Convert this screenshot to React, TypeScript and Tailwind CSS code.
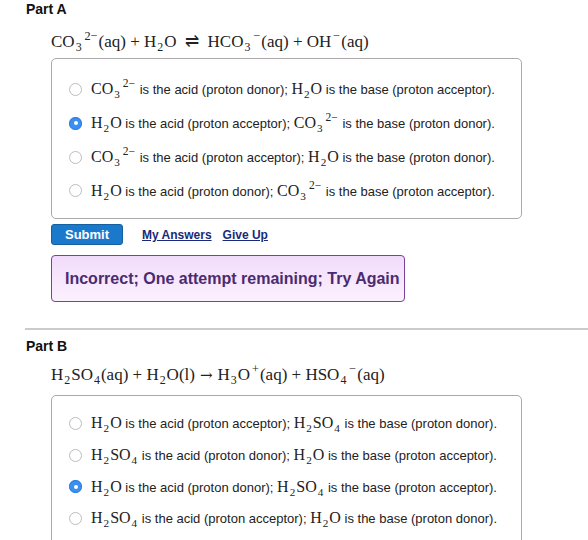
import React from 'react';

const serif = "font-['Liberation_Serif',serif]";

function Sb({ children }: { children: React.ReactNode }) {
  return <span className="relative top-[4px] text-[0.7em] leading-none ml-[1px] mr-[1px]">{children}</span>;
}

function Sp({ children }: { children: React.ReactNode }) {
  return <span className="relative top-[-7px] text-[0.72em] leading-none ml-[2px] mr-[1px]">{children}</span>;
}

// chemistry formulas in the math font
const CO3 = () => (
  <span className={serif}>
    CO<Sb>3</Sb>
    <Sp>2−</Sp>
  </span>
);
const H2O = () => (
  <span className={serif}>
    H<Sb>2</Sb>O
  </span>
);
const H2SO4 = () => (
  <span className={serif}>
    H<Sb>2</Sb>SO<Sb>4</Sb>
  </span>
);

function Radio({ checked }: { checked?: boolean }) {
  if (checked) {
    return (
      <span className="w-[13px] h-[13px] rounded-full bg-[#3a8ff0] flex items-center justify-center shrink-0 shadow-[inset_0_0_0_1px_#2d7fe0]">
        <span className="w-[4px] h-[4px] rounded-full bg-white" />
      </span>
    );
  }
  return <span className="w-[13px] h-[13px] rounded-full border border-[#bdbdbd] bg-white shrink-0" />;
}

function Option({ checked, h, children }: { checked?: boolean; h: string; children: React.ReactNode }) {
  return (
    <div className={`flex items-center ${h} pl-[17px] text-[13px] text-[#222]`}>
      <Radio checked={checked} />
      <div className="ml-[9px] whitespace-nowrap">{children}</div>
    </div>
  );
}

const F = ({ children }: { children: React.ReactNode }) => <span className="text-[16px]">{children}</span>;

export default function App() {
  return (
    <div className="w-[588px] h-[540px] overflow-hidden bg-white font-['Liberation_Sans',Arial,sans-serif] text-[#222]">
      <div className="pl-[26px]">
        <h2 className="text-[14px] font-bold leading-[17px] pt-[1px] text-[#111]">Part A</h2>

        <div className={`${serif} text-[17px] pl-[25px] mt-[14px] leading-[20px] whitespace-nowrap`}>
          CO<Sb>3</Sb>
          <Sp>2−</Sp>(aq) + H<Sb>2</Sb>O&nbsp; ⇌&nbsp; HCO<Sb>3</Sb>
          <Sp>−</Sp>(aq) + OH<Sp>−</Sp>(aq)
        </div>

        <div className="ml-[25px] mt-[6px] w-[471px] border border-[#aaa] rounded-[5px] pt-[13px] pb-[11px]">
          <Option h="h-[34px]">
            <F><CO3 /></F> is the acid (proton donor); <F><H2O /></F> is the base (proton acceptor).
          </Option>
          <Option h="h-[34px]" checked>
            <F><H2O /></F> is the acid (proton acceptor); <F><CO3 /></F> is the base (proton donor).
          </Option>
          <Option h="h-[34px]">
            <F><CO3 /></F> is the acid (proton acceptor); <F><H2O /></F> is the base (proton donor).
          </Option>
          <Option h="h-[33px]">
            <F><H2O /></F> is the acid (proton donor); <F><CO3 /></F> is the base (proton acceptor).
          </Option>
        </div>

        <div className="ml-[25px] mt-[5px] flex items-center">
          <button className="w-[72px] h-[21px] rounded-[3px] bg-[#1b79cc] border border-[#15609f] text-white text-[13px] font-bold leading-none">
            Submit
          </button>
          <a className="ml-[19px] text-[12px] font-bold text-[#1a2a78] underline mt-[1px]">My Answers</a>
          <a className="ml-[11px] text-[12px] font-bold text-[#1a2a78] underline mt-[1px]">Give Up</a>
        </div>

        <div className="ml-[25px] mt-[10px] w-[354px] h-[47px] rounded-[4px] border border-[#7b3f9c] bg-gradient-to-b from-[#f1dbfb] to-[#fcf1fe] flex items-center pl-[13px]">
          <span className="text-[16px] font-bold text-[#4b2b70]">Incorrect; One attempt remaining; Try Again</span>
        </div>
      </div>

      <div className="ml-[25px] mt-[26px] h-[2px] bg-[#cbcbcb]" />

      <div className="pl-[26px]">
        <h2 className="text-[14px] font-bold leading-[17px] mt-[8px] text-[#111]">Part B</h2>

        <div className={`${serif} text-[17px] pl-[25px] mt-[10px] leading-[20px] whitespace-nowrap`}>
          H<Sb>2</Sb>SO<Sb>4</Sb>(aq) + H<Sb>2</Sb>O(l)
          <span className="font-['DejaVu_Serif',serif] text-[15px] mx-[5px]">→</span>
          H<Sb>3</Sb>O<Sp>+</Sp>(aq) + HSO<Sb>4</Sb>
          <Sp>−</Sp>(aq)
        </div>

        <div className="ml-[25px] mt-[10px] w-[471px] border border-[#aaa] rounded-[5px] pt-[11px] pb-[12px]">
          <Option h="h-[32px]">
            <F><H2O /></F> is the acid (proton acceptor); <F><H2SO4 /></F> is the base (proton donor).
          </Option>
          <Option h="h-[32px]">
            <F><H2SO4 /></F> is the acid (proton donor); <F><H2O /></F> is the base (proton acceptor).
          </Option>
          <Option h="h-[31px]" checked>
            <F><H2O /></F> is the acid (proton donor); <F><H2SO4 /></F> is the base (proton acceptor).
          </Option>
          <Option h="h-[32px]">
            <F><H2SO4 /></F> is the acid (proton acceptor); <F><H2O /></F> is the base (proton donor).
          </Option>
        </div>
      </div>
    </div>
  );
}
